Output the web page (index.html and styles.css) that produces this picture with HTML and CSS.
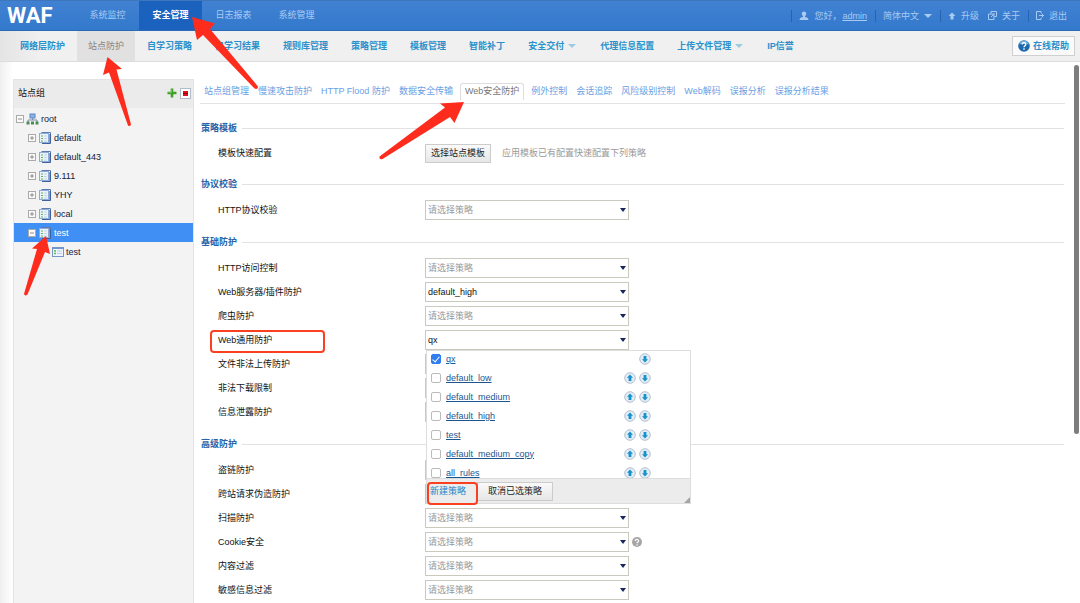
FILE: index.html
```html
<!DOCTYPE html>
<html lang="zh-CN">
<head>
  <meta charset="UTF-8" />
  <meta name="viewport" content="width=device-width, initial-scale=1.0" />
  <title>WAF</title>
  <link rel="stylesheet" href="styles.css">
</head>
<body>
  <!-- icons used more than once -->
  <svg class="sprite" aria-hidden="true">
    <symbol id="i-plus" viewBox="0 0 8 8"><rect x="0.5" y="0.5" width="7" height="7" fill="#fafafa" stroke="#aaa"/><path d="M2 4h4M4 2v4" stroke="#777" stroke-width="0.8"/></symbol>
    <symbol id="i-minus" viewBox="0 0 8 8"><rect x="0.5" y="0.5" width="7" height="7" fill="#fafafa" stroke="#aaa"/><path d="M2 4h4" stroke="#777" stroke-width="0.8"/></symbol>
    <symbol id="i-group" viewBox="0 0 12 12"><path d="M2.500 0.500h9v9" fill="none" stroke="#5b7bb0"/><path d="M3 2h8.500v9.500H3z" fill="#7f9fd0"/><rect x="0.5" y="1.500" width="9" height="9" fill="#eaf2fc" stroke="#8fabd6"/><path d="M2 4h2M2 6.500h2M2 9h2" stroke="#5cb848" stroke-width="1.200"/><path d="M5 4h3M5 6.500h3M5 9h3" stroke="#c3d4ec"/><path d="M3 11.500h8.500V2" stroke="#3f629f" fill="none"/></symbol>
    <symbol id="i-up" viewBox="0 0 12 12"><circle cx="6" cy="6" r="5.300" fill="#e3ebf3" stroke="#b3c1d1"/><path d="M6 2.500 9 5.800H7.400V9H4.600V5.800H3z" fill="#1493cf"/></symbol>
    <symbol id="i-down" viewBox="0 0 12 12"><circle cx="6" cy="6" r="5.300" fill="#e3ebf3" stroke="#b3c1d1"/><path d="M6 9.500 9 6.200H7.400V3H4.600v3.200H3z" fill="#1493cf"/></symbol>
  </svg>

  <header class="header">
    <div class="logo">WAF</div>
    <nav class="main-nav">
      <a href="#">系统监控</a>
      <a href="#" class="active">安全管理</a>
      <a href="#">日志报表</a>
      <a href="#">系统管理</a>
    </nav>
    <div class="user-bar">
      <div class="user-item">
        <svg width="10" height="10" viewBox="0 0 10 10"><path d="M5 0.500c1.500 0 2.200 1 2.200 2.200C7.200 4 6.600 4.600 6 5v1c1.800.3 3.300.8 3.500 3h-9C.7 6.800 2.200 6.300 4 6V5c-.6-.4-1.200-1-1.200-2.300C2.800 1.500 3.500.5 5 .5z" fill="#a9cbf2"/></svg>
        <span class="hello">您好，</span>
        <a href="#" class="user-name">admin</a>
      </div>
      <div class="user-item">
        <a href="#">简体中文</a>
        <span class="caret"></span>
      </div>
      <div class="user-item">
        <svg width="8" height="8" viewBox="0 0 8 8"><path d="M4 0.500 7.500 4H5.500v3.500h-3V4h-2z" fill="#a9cbf2"/></svg>
        <a href="#">升级</a>
        <svg class="about-icon" width="9" height="9" viewBox="0 0 9 9" fill="none" stroke="#a9cbf2"><path d="M3 2.500V.5h5.500v5H6.500M.5 3h5.500v5.500H.5zM3 6l3.500-3.500"/></svg>
        <a href="#">关于</a>
      </div>
      <div class="user-item">
        <svg width="8" height="9" viewBox="0 0 8 9" fill="none" stroke="#a9cbf2"><path d="M5 2V.5H.5v8H5V7M3 4.500h5M5.500 2.500 7.500 4.500 5.500 6.500"/></svg>
        <a href="#">退出</a>
      </div>
    </div>
  </header>

  <div class="sub-header">
    <nav class="sub-nav">
      <a href="#">网络层防护</a>
      <a href="#" class="active">站点防护</a>
      <a href="#">自学习策略</a>
      <a href="#">自学习结果</a>
      <a href="#">规则库管理</a>
      <a href="#">策略管理</a>
      <a href="#">模板管理</a>
      <a href="#">智能补丁</a>
      <a href="#">安全交付<span class="caret"></span></a>
      <a href="#">代理信息配置</a>
      <a href="#">上传文件管理<span class="caret"></span></a>
      <a href="#">IP信誉</a>
    </nav>
    <button type="button" class="help-btn">
      <svg width="12" height="12" viewBox="0 0 12 12"><circle cx="6" cy="6" r="5.800" fill="#1c69ad"/><path d="M1 4.500a5.200 5.200 0 0 1 10 0C8 3 4 3 1 4.500z" fill="#6fb3e4"/><path d="M4.200 4.500C4.200 2 8 2.300 7.800 4.500 7.700 5.800 6 5.800 6 7.300M6 8.300v1.400" fill="none" stroke="#fff" stroke-width="1.400"/></svg>
      在线帮助
    </button>
  </div>

  <div class="page">
    <aside class="sidebar">
      <div class="sidebar-title">
        <h2>站点组</h2>
        <button type="button" class="icon-btn" aria-label="添加">
          <svg width="10" height="10" viewBox="0 0 10 10"><path d="M3.700.5h2.600v3.200h3.200v2.600H6.300v3.200H3.700V6.300H.5V3.700h3.200z" fill="#3fa026"/><path d="M4.500 1.500v3h-3" fill="none" stroke="#7cc95c" stroke-width="0.8"/></svg>
        </button>
        <button type="button" class="icon-btn" aria-label="删除">
          <svg width="11" height="11" viewBox="0 0 11 11"><rect x="0.500" y="0.500" width="10" height="10" fill="#fff" stroke="#b0bccb"/><rect x="3" y="3" width="5" height="5" fill="#e0101c"/><path d="M3 5.500h5" stroke="#8e0710"/></svg>
        </button>
      </div>
      <ul class="tree">
        <li class="node">
          <svg width="8" height="8"><use href="#i-minus"/></svg>
          <svg width="13" height="12" viewBox="0 0 13 12"><rect x="4" y="1" width="5" height="4" fill="#8cb4e8" stroke="#5c86c4"/><path d="M6.500 5v2M2 9V7h9v2" fill="none" stroke="#7c8ea8"/><path d="M.5 8.500h3v3h-3zM5 8.500h3v3H5zM9.500 8.500h3v3h-3z" fill="#4c8c58"/></svg>
          <a href="#">root</a>
        </li>
        <li class="node level-1"><svg width="8" height="8"><use href="#i-plus"/></svg><svg width="12" height="12"><use href="#i-group"/></svg><a href="#">default</a></li>
        <li class="node level-1"><svg width="8" height="8"><use href="#i-plus"/></svg><svg width="12" height="12"><use href="#i-group"/></svg><a href="#">default_443</a></li>
        <li class="node level-1"><svg width="8" height="8"><use href="#i-plus"/></svg><svg width="12" height="12"><use href="#i-group"/></svg><a href="#">9.111</a></li>
        <li class="node level-1"><svg width="8" height="8"><use href="#i-plus"/></svg><svg width="12" height="12"><use href="#i-group"/></svg><a href="#">YHY</a></li>
        <li class="node level-1"><svg width="8" height="8"><use href="#i-plus"/></svg><svg width="12" height="12"><use href="#i-group"/></svg><a href="#">local</a></li>
        <li class="node level-1 selected"><svg width="8" height="8"><use href="#i-minus"/></svg><svg width="12" height="12"><use href="#i-group"/></svg><a href="#">test</a></li>
        <li class="node level-2">
          <svg width="12" height="10" viewBox="0 0 12 10"><rect x="0.500" y="0.500" width="11" height="9" fill="#eef5ff" stroke="#7796c8"/><path d="M1 1.500h10" stroke="#6f95d2"/><path d="M2 4h2M2 6.500h2" stroke="#5cb848" stroke-width="1.500"/><path d="M5 4h5M5 6.500h5" stroke="#b9cdea"/></svg>
          <a href="#">test</a>
        </li>
      </ul>
    </aside>

    <main class="content">
      <nav class="tabs">
        <a href="#">站点组管理</a>
        <a href="#">慢速攻击防护</a>
        <a href="#">HTTP Flood 防护</a>
        <a href="#">数据安全传输</a>
        <a href="#" class="active">Web安全防护</a>
        <a href="#">例外控制</a>
        <a href="#">会话追踪</a>
        <a href="#">风险级别控制</a>
        <a href="#">Web解码</a>
        <a href="#">误报分析</a>
        <a href="#">误报分析结果</a>
      </nav>

      <form class="policy-form">
        <section>
          <h3>策略模板</h3>
          <div class="row template-row">
            <span class="label">模板快速配置</span>
            <button type="button" class="btn">选择站点模板</button>
            <span class="tip">应用模板已有配置快速配置下列策略</span>
          </div>
        </section>

        <section>
          <h3>协议校验</h3>
          <div class="row">
            <label for="http-protocol">HTTP协议校验</label>
            <div class="field"><select id="http-protocol" class="empty"><option>请选择策略</option></select></div>
          </div>
        </section>

        <section>
          <h3>基础防护</h3>
          <div class="row">
            <label for="http-access">HTTP访问控制</label>
            <div class="field"><select id="http-access" class="empty"><option>请选择策略</option></select></div>
          </div>
          <div class="row">
            <label for="web-plugin">Web服务器/插件防护</label>
            <div class="field"><select id="web-plugin"><option>default_high</option></select></div>
          </div>
          <div class="row">
            <label for="crawler">爬虫防护</label>
            <div class="field"><select id="crawler" class="empty"><option>请选择策略</option></select></div>
          </div>
          <div class="row">
            <label for="web-general">Web通用防护</label>
            <div class="field">
              <select id="web-general"><option>qx</option></select>
              <div class="dropdown">
                <ul>
                  <li><input type="checkbox" id="p1" aria-label="qx" checked><a href="#">qx</a><svg width="12" height="12"><use href="#i-down"/></svg></li>
                  <li><input type="checkbox" id="p2" aria-label="default_low"><a href="#">default_low</a><svg width="12" height="12"><use href="#i-up"/></svg><svg width="12" height="12"><use href="#i-down"/></svg></li>
                  <li><input type="checkbox" id="p3" aria-label="default_medium"><a href="#">default_medium</a><svg width="12" height="12"><use href="#i-up"/></svg><svg width="12" height="12"><use href="#i-down"/></svg></li>
                  <li><input type="checkbox" id="p4" aria-label="default_high"><a href="#">default_high</a><svg width="12" height="12"><use href="#i-up"/></svg><svg width="12" height="12"><use href="#i-down"/></svg></li>
                  <li><input type="checkbox" id="p5" aria-label="test"><a href="#">test</a><svg width="12" height="12"><use href="#i-up"/></svg><svg width="12" height="12"><use href="#i-down"/></svg></li>
                  <li><input type="checkbox" id="p6" aria-label="default_medium_copy"><a href="#">default_medium_copy</a><svg width="12" height="12"><use href="#i-up"/></svg><svg width="12" height="12"><use href="#i-down"/></svg></li>
                  <li><input type="checkbox" id="p7" aria-label="all_rules"><a href="#">all_rules</a><svg width="12" height="12"><use href="#i-up"/></svg><svg width="12" height="12"><use href="#i-down"/></svg></li>
                </ul>
                <div class="dropdown-footer">
                  <a href="#">新建策略</a>
                  <button type="button" class="btn">取消已选策略</button>
                  <svg class="grip" width="6" height="6" viewBox="0 0 6 6"><path d="M6 0v6H0z" fill="#a5a5a5"/></svg>
                </div>
              </div>
            </div>
          </div>
          <div class="row">
            <label for="upload">文件非法上传防护</label>
            <div class="field"><select id="upload" class="empty"><option>请选择策略</option></select></div>
          </div>
          <div class="row">
            <label for="download">非法下载限制</label>
            <div class="field"><select id="download" class="empty"><option>请选择策略</option></select></div>
          </div>
          <div class="row">
            <label for="leak">信息泄露防护</label>
            <div class="field"><select id="leak" class="empty"><option>请选择策略</option></select></div>
          </div>
        </section>

        <section>
          <h3>高级防护</h3>
          <div class="row">
            <label for="hotlink">盗链防护</label>
            <div class="field"><select id="hotlink" class="empty"><option>请选择策略</option></select></div>
          </div>
          <div class="row">
            <label for="csrf">跨站请求伪造防护</label>
            <div class="field"><select id="csrf" class="empty"><option>请选择策略</option></select></div>
          </div>
          <div class="row">
            <label for="scan">扫描防护</label>
            <div class="field"><select id="scan" class="empty"><option>请选择策略</option></select></div>
          </div>
          <div class="row">
            <label for="cookie">Cookie安全</label>
            <div class="field"><select id="cookie" class="empty"><option>请选择策略</option></select></div>
            <svg class="hint" width="10" height="10" viewBox="0 0 10 10"><circle cx="5" cy="5" r="5" fill="#a6a6a6"/><path d="M3.300 4C3.300 1.800 6.700 2 6.600 4 6.500 5 5 5 5 6.300M5 7.200v1.200" fill="none" stroke="#fff" stroke-width="1.200"/></svg>
          </div>
          <div class="row">
            <label for="filter">内容过滤</label>
            <div class="field"><select id="filter" class="empty"><option>请选择策略</option></select></div>
          </div>
          <div class="row">
            <label for="sensitive">敏感信息过滤</label>
            <div class="field"><select id="sensitive" class="empty"><option>请选择策略</option></select></div>
          </div>
        </section>
      </form>
    </main>
    <div class="scroll-thumb"></div>
  </div>

  <!-- red arrows and boxes marking the steps -->
  <svg class="marks" width="700" height="520" viewBox="0 0 700 520" aria-hidden="true">
    <g fill="#fe2c1c">
      <path d="M192 17 215 23.500 210 29 258 86.500Q258 90 254.500 88.500L203 35 197 40z"/>
      <path d="M107.500 57 122 69 116.500 69.500 131 124.500Q130 127 128 125.500L109 72.500 103 75z"/>
      <path d="M464 102 440 103.500 445 107.500 379.500 156.500Q379 160 382.500 159L450 117 454.500 123z"/>
      <path d="M46 236 32 248.500 37 249 24 294Q25 296.500 27.500 294.500L45 252 50 254z"/>
    </g>
    <g fill="none" stroke="#fb4022" stroke-width="2">
      <rect x="211" y="331" width="113" height="21" rx="3"/>
      <rect x="428" y="483" width="49" height="21" rx="3"/>
    </g>
  </svg>
</body>
</html>
```
FILE: styles.css
```css
* {
  box-sizing: border-box;
}
body {
  margin: 0;
  height: 100vh;
  display: flex;
  flex-direction: column;
  overflow: hidden;
  font-family: "Liberation Sans", "Noto Sans CJK SC", sans-serif;
  font-size: 9px;
  line-height: 14px;
  color: #111;
  background: #fff;
}
a {
  text-decoration: none;
  color: inherit;
}
button, select, input {
  font: inherit;
}
h2, h3, ul {
  margin: 0;
  padding: 0;
  font-size: inherit;
}
ul {
  list-style: none;
}
svg {
  flex-shrink: 0;
}
.sprite {
  position: absolute;
  width: 0;
  height: 0;
}
.caret {
  border: 4px solid transparent;
  border-top-color: currentColor;
  border-bottom: 0;
}

/* header */
.header {
  display: flex;
  flex-shrink: 0;
  height: 31px;
  background: linear-gradient(#4181d2, #3379cc);
  border-top: 1px solid #3d76bd;
  border-bottom: 1px solid #2c69b6;
  color: #a9cbf2;
}
.logo {
  width: 76px;
  padding-left: 7px;
  font-family: Roboto, "Liberation Sans", sans-serif;
  font-size: 22px;
  line-height: 30px;
  font-weight: bold;
  color: #fff;
}
.main-nav {
  display: flex;
}
.main-nav a {
  width: 63px;
  line-height: 29px;
  text-align: center;
}
.main-nav a.active {
  background: #1a62bd;
  color: #fff;
  font-weight: bold;
}
.user-bar {
  display: flex;
  align-items: center;
  margin-left: auto;
  padding-right: 5px;
}
.user-item {
  display: flex;
  align-items: center;
  gap: 5px;
  height: 12px;
  padding: 0 8px 0 7px;
  border-left: 1px solid #2763ae;
}
.hello {
  margin-right: -4px;
}
.user-name {
  text-decoration: underline;
}
.about-icon {
  margin-left: 4px;
}

/* second level menu */
.sub-header {
  display: flex;
  flex-shrink: 0;
  align-items: center;
  height: 31px;
  padding: 0 5px 0 9px;
  background: linear-gradient(to right, #e4e4e4, #f0f0f0 40px);
  border-bottom: 1px solid #dcdcdc;
}
.sub-nav {
  display: flex;
  gap: 1px;
  color: #2b90cb;
  font-weight: bold;
}
.sub-nav a {
  display: flex;
  align-items: center;
  height: 30px;
  padding: 0 11px;
}
.sub-nav a.active {
  background: #e1e1e1;
  color: #858585;
  font-weight: normal;
}
.sub-nav .caret {
  margin: 0 1px 0 4px;
  color: #9acbe2;
}
.help-btn {
  display: flex;
  align-items: center;
  gap: 3px;
  height: 20px;
  margin-left: auto;
  padding: 0 5px;
  border: 1px solid #d0d0d0;
  background: #fafafa;
  color: #2b90cb;
  font-weight: bold;
}

/* page */
.page {
  position: relative;
  display: flex;
  flex: 1;
  min-height: 0;
  padding: 17px 15px 0 13px;
  gap: 6px;
  background: linear-gradient(to right, #efefef, #fff 13px);
}
.scroll-thumb {
  position: absolute;
  top: 3px;
  right: 1px;
  width: 5px;
  height: 369px;
  border-radius: 3px;
  background: #7d7d7d;
}

/* sidebar */
.sidebar {
  width: 181px;
  flex-shrink: 0;
  background: #f3f3f3;
  border: 1px solid #e3e3e3;
  border-bottom: 0;
}
.sidebar-title {
  display: flex;
  align-items: center;
  gap: 3px;
  height: 28px;
  padding: 0 2px 2px 4px;
  background: #ebebeb;
}
.sidebar-title h2 {
  margin-right: auto;
  font-weight: normal;
}
.icon-btn {
  display: flex;
  padding: 0;
  border: 0;
  background: none;
}
.tree {
  padding-top: 1px;
  color: #10203f;
}
.node {
  display: flex;
  align-items: center;
  gap: 2px;
  height: 19px;
  padding-left: 2px;
}
.level-1 {
  gap: 3px;
  padding-left: 14px;
}
.level-2 {
  padding-left: 38px;
}
.selected {
  background: #3f8ff4;
  color: #fff;
}

/* tabs */
.content {
  flex: 1;
  min-width: 0;
}
.tabs {
  display: flex;
  gap: 1px;
  padding: 4px 0 3px;
  border-bottom: 1px solid #e3e3e3;
  color: #69a0e4;
}
.tabs a {
  height: 17px;
  padding: 1px 4px 0;
  white-space: nowrap;
}
.tabs a.active {
  margin: 0 2px;
  padding-top: 0;
  border: 1px solid #ddd;
  border-bottom: 0;
  border-radius: 3px 3px 0 0;
  color: #777;
}

/* form */
.policy-form {
  padding: 16px 1px 0;
}
section {
  margin-bottom: 12px;
}
h3 {
  display: flex;
  align-items: center;
  gap: 5px;
  height: 16px;
  margin-bottom: 6px;
  color: #2a62a8;
}
h3::after {
  content: "";
  flex: 1;
  height: 1px;
  background: #e2e2e2;
}
.row {
  display: flex;
  align-items: center;
  height: 24px;
  padding-left: 17px;
}
.template-row {
  height: 22px;
}
.row label, .label {
  width: 207px;
}
.btn {
  height: 19px;
  padding: 0 5px;
  border: 1px solid #ccc;
  background: linear-gradient(#fafafa, #e6e6e6);
  color: #222;
}
.tip {
  margin-left: 11px;
  color: #999;
}
.field {
  position: relative;
  width: 204px;
}
.field::after {
  content: "";
  position: absolute;
  top: 8px;
  right: 3px;
  border: 3px solid transparent;
  border-top: 4px solid #14265a;
  border-bottom: 0;
  pointer-events: none;
}
.field select {
  display: block;
  width: 100%;
  height: 20px;
  padding: 0 2px;
  border: 1px solid #c9c9bd;
  border-radius: 0;
  background: #fff;
  color: #111;
  appearance: none;
}
.field select.empty {
  color: #999;
}
.hint {
  margin-left: 3px;
}

/* policy list opened under the select */
.dropdown {
  position: absolute;
  z-index: 2;
  top: 100%;
  left: 1px;
  width: 265px;
  border: 1px solid #ddd;
  background: #fff;
}
.dropdown ul {
  height: 127px;
  overflow: hidden;
}
.dropdown li {
  display: flex;
  align-items: center;
  gap: 3px;
  height: 19px;
  padding: 0 39px 4px 4px;
}
.dropdown input {
  width: 10px;
  height: 10px;
  margin: 0;
  appearance: none;
  border: 1px solid #bbb;
  border-radius: 2px;
  background: #fff;
}
.dropdown input:checked {
  border-color: #2f7df0;
  background: #2f7df0;
}
.dropdown input:checked::after {
  content: "";
  display: block;
  width: 3px;
  height: 6px;
  margin: 0 auto;
  border: solid #fff;
  border-width: 0 1px 1px 0;
  transform: rotate(40deg);
}
.dropdown li a {
  margin: 0 auto 0 2px;
  color: #1c5690;
  text-decoration: underline;
}
.dropdown-footer {
  display: flex;
  align-items: center;
  height: 25px;
  padding-left: 3px;
  gap: 11px;
  border-top: 1px solid #ddd;
  background: #ececec;
}
.dropdown-footer a {
  color: #1886c8;
}
.dropdown-footer .btn {
  padding: 0 10px;
}
.grip {
  align-self: flex-end;
  margin-left: auto;
}

.marks {
  position: absolute;
  z-index: 3;
  top: 0;
  left: 0;
  pointer-events: none;
}
```
